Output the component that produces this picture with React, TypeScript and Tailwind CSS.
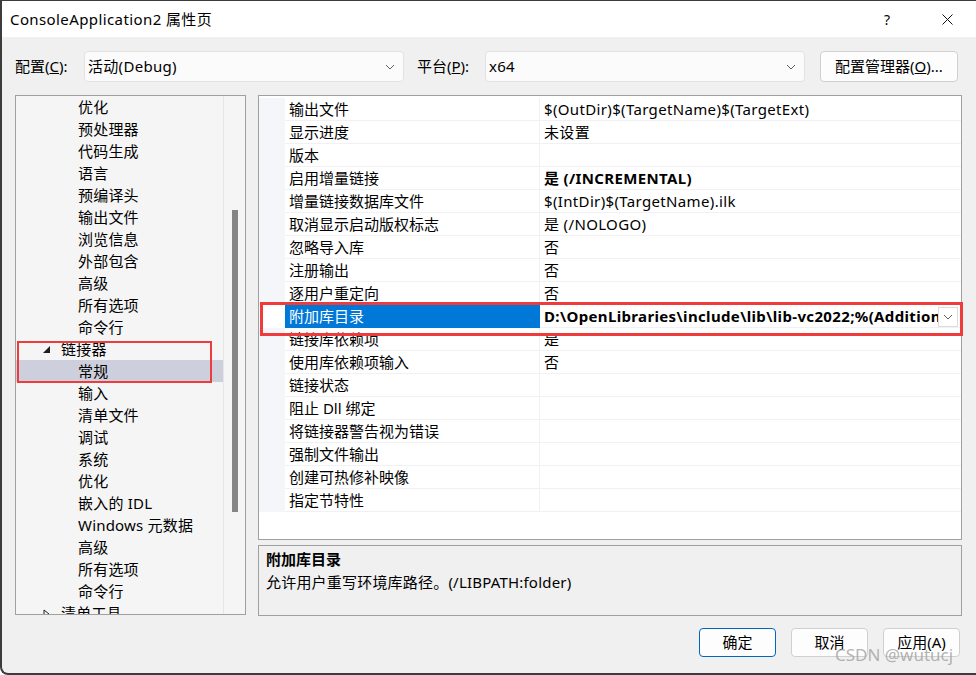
import React from "react";

type TreeItem = { t: string; lv: 1 | 2; sel?: boolean; open?: boolean };

const treeItems: TreeItem[] = [
  { t: "优化", lv: 2 },
  { t: "预处理器", lv: 2 },
  { t: "代码生成", lv: 2 },
  { t: "语言", lv: 2 },
  { t: "预编译头", lv: 2 },
  { t: "输出文件", lv: 2 },
  { t: "浏览信息", lv: 2 },
  { t: "外部包含", lv: 2 },
  { t: "高级", lv: 2 },
  { t: "所有选项", lv: 2 },
  { t: "命令行", lv: 2 },
  { t: "链接器", lv: 1, open: true },
  { t: "常规", lv: 2, sel: true },
  { t: "输入", lv: 2 },
  { t: "清单文件", lv: 2 },
  { t: "调试", lv: 2 },
  { t: "系统", lv: 2 },
  { t: "优化", lv: 2 },
  { t: "嵌入的 IDL", lv: 2 },
  { t: "Windows 元数据", lv: 2 },
  { t: "高级", lv: 2 },
  { t: "所有选项", lv: 2 },
  { t: "命令行", lv: 2 },
  { t: "清单工具", lv: 1, open: false },
];

type Prop = { name: string; value: string; bold?: boolean; sel?: boolean };

const props: Prop[] = [
  { name: "输出文件", value: "$(OutDir)$(TargetName)$(TargetExt)" },
  { name: "显示进度", value: "未设置" },
  { name: "版本", value: "" },
  { name: "启用增量链接", value: "是 (/INCREMENTAL)", bold: true },
  { name: "增量链接数据库文件", value: "$(IntDir)$(TargetName).ilk" },
  { name: "取消显示启动版权标志", value: "是 (/NOLOGO)" },
  { name: "忽略导入库", value: "否" },
  { name: "注册输出", value: "否" },
  { name: "逐用户重定向", value: "否" },
  {
    name: "附加库目录",
    value: "D:\\OpenLibraries\\include\\lib\\lib-vc2022;%(AdditionalLibraryDirectories)",
    bold: true,
    sel: true,
  },
  { name: "链接库依赖项", value: "是" },
  { name: "使用库依赖项输入", value: "否" },
  { name: "链接状态", value: "" },
  { name: "阻止 Dll 绑定", value: "" },
  { name: "将链接器警告视为错误", value: "" },
  { name: "强制文件输出", value: "" },
  { name: "创建可热修补映像", value: "" },
  { name: "指定节特性", value: "" },
];

function Chevron() {
  return (
    <svg width="10" height="6" viewBox="0 0 10 6" className="shrink-0">
      <path d="M1 1 L5 5 L9 1" fill="none" stroke="#606060" strokeWidth="1" />
    </svg>
  );
}

function Combo({ text, width }: { text: string; width: string }) {
  return (
    <div
      className={`${width} h-[31px] flex items-center justify-between bg-[#fbfbfb] border border-[#e2e2e2] rounded-[4px] pl-[3px] pr-[8px]`}
    >
      <span className="tracking-[0.3px]">{text}</span>
      <Chevron />
    </div>
  );
}

function Button({ children, primary }: { children: React.ReactNode; primary?: boolean }) {
  return (
    <div
      className={`w-[77px] h-[29px] flex items-center justify-center rounded-[4px] bg-[#fdfdfd] ${
        primary ? "border border-[#0067c0]" : "border border-[#d0d0d0]"
      }`}
    >
      {children}
    </div>
  );
}

export default function App() {
  return (
    <div className="relative w-[976px] h-[675px] overflow-hidden bg-[#f0f0f0] text-[15px] text-black font-['Noto_Sans','Noto_Sans_CJK_SC',sans-serif] border-l-2 border-b-2 border-t border-[#3c3c3c] rounded-bl-[8px] flex flex-col">
      {/* title bar */}
      <div className="h-[36px] bg-white flex items-center pl-[8px] shrink-0">
        <span className="flex-1 tracking-[0.4px]">ConsoleApplication2 属性页</span>
        <span className="w-[20px] text-center text-[14px] mr-[45px]">?</span>
        <svg width="11" height="11" viewBox="0 0 11 11" className="mr-[23px]">
          <path d="M0.5 0.5 L10.5 10.5 M10.5 0.5 L0.5 10.5" stroke="#111" strokeWidth="1" />
        </svg>
      </div>

      {/* config row */}
      <div className="flex items-center pl-[13px] mt-[13px] h-[33px]">
        <span className="w-[69px]">
          配置(<span className="underline">C</span>):
        </span>
        <Combo text="活动(Debug)" width="w-[320px]" />
        <span className="ml-[13px] w-[68px]">
          平台(<span className="underline">P</span>):
        </span>
        <Combo text="x64" width="w-[320px]" />
        <div className="ml-[15px] w-[138px] h-[31px] flex items-center justify-center bg-[#fdfdfd] border border-[#d0d0d0] rounded-[4px]">
          配置管理器(<span className="underline">O</span>)...
        </div>
      </div>

      {/* main */}
      <div className="flex pl-[13px] mt-[12px] h-[521px]">
        {/* tree */}
        <div className="w-[231px] h-[520px] border border-[#a0a0a0] bg-[#f5f5f5] flex relative overflow-hidden">
          <div className="flex-1 overflow-hidden relative">
            {treeItems.map((it, i) => (
              <div
                key={i}
                className={`h-[22px] flex items-center whitespace-nowrap pt-[1px] ${it.sel ? "bg-[#cdd0dc]" : ""} ${
                  it.lv === 2 ? "pl-[62px]" : "pl-[27px]"
                }`}
              >
                {it.lv === 1 &&
                  (it.open ? (
                    <svg width="8" height="8" viewBox="0 0 8 8" className="mr-[10px]">
                      <polygon points="7,0 7,7 0,7" fill="#1e1e1e" />
                    </svg>
                  ) : (
                    <svg width="8" height="10" viewBox="0 0 8 10" className="mr-[10px]">
                      <polygon points="1,1 6,5 1,9" fill="none" stroke="#1e1e1e" strokeWidth="1" />
                    </svg>
                  ))}
                <span className="tracking-[0.2px]">{it.t}</span>
              </div>
            ))}
          </div>
          <div className="w-[22px] border-l border-[#e6e6e6] bg-[#f5f5f5] flex justify-center pt-[114px]">
            <div className="w-[6px] h-[302px] bg-[#858585]" />
          </div>
        </div>

        {/* right column */}
        <div className="ml-[12px] w-[704px] flex flex-col">
          <div className="h-[445px] border border-[#a0a0a0] bg-white pt-[2px] overflow-hidden">
            {props.map((p, i) => (
              <div key={i} className="h-[23px] flex">
                <div className={`w-[26px] shrink-0 ${p.sel ? "bg-white" : "bg-[#f4f6fa]"}`} />
                <div
                  className={`w-[255px] shrink-0 pl-[4px] pt-[1px] flex items-center border-b border-r ${
                    p.sel ? "bg-[#0078d7] text-white border-[#0078d7]" : "border-[#f0f0f5]"
                  }`}
                >
                  {p.name}
                </div>
                <div className="flex-1 min-w-0 flex items-center border-b border-[#f0f0f5] pl-[4px] pr-[3px] pt-[1px]">
                  <span
                    className={`flex-1 whitespace-nowrap overflow-hidden tracking-[0.35px] ${
                      p.bold ? "font-bold" : ""
                    }`}
                  >
                    {p.value}
                  </span>
                  {p.sel && (
                    <div className="w-[20px] h-[20px] shrink-0 border border-[#dcdcdc] bg-white flex items-center justify-center">
                      <Chevron />
                    </div>
                  )}
                </div>
              </div>
            ))}
          </div>
          <div className="mt-[5px] h-[71px] border border-[#a0a0a0] bg-[#f0f0f0] px-[7px] pt-[2px] leading-[23px]">
            <div className="font-bold">附加库目录</div>
            <div className="tracking-[0.2px]">允许用户重写环境库路径。(/LIBPATH:folder)</div>
          </div>
        </div>
      </div>

      {/* buttons */}
      <div className="flex justify-end gap-[15px] pr-[16px] mt-[12px]">
        <Button primary>确定</Button>
        <Button>取消</Button>
        <Button>应用(A)</Button>
      </div>

      {/* annotation overlays */}
      <div className="absolute left-[15px] top-[340px] w-[195px] h-[42px] border-2 border-[#ee3b3b]" />
      <div className="absolute left-[258px] top-[301px] w-[703px] h-[34px] border-[3px] border-[#ee3b3b]" />
      <div className="absolute left-[833px] top-[641px] text-[17px] text-[#a0a0a0]/80">
        CSDN @wutucj
      </div>
    </div>
  );
}
